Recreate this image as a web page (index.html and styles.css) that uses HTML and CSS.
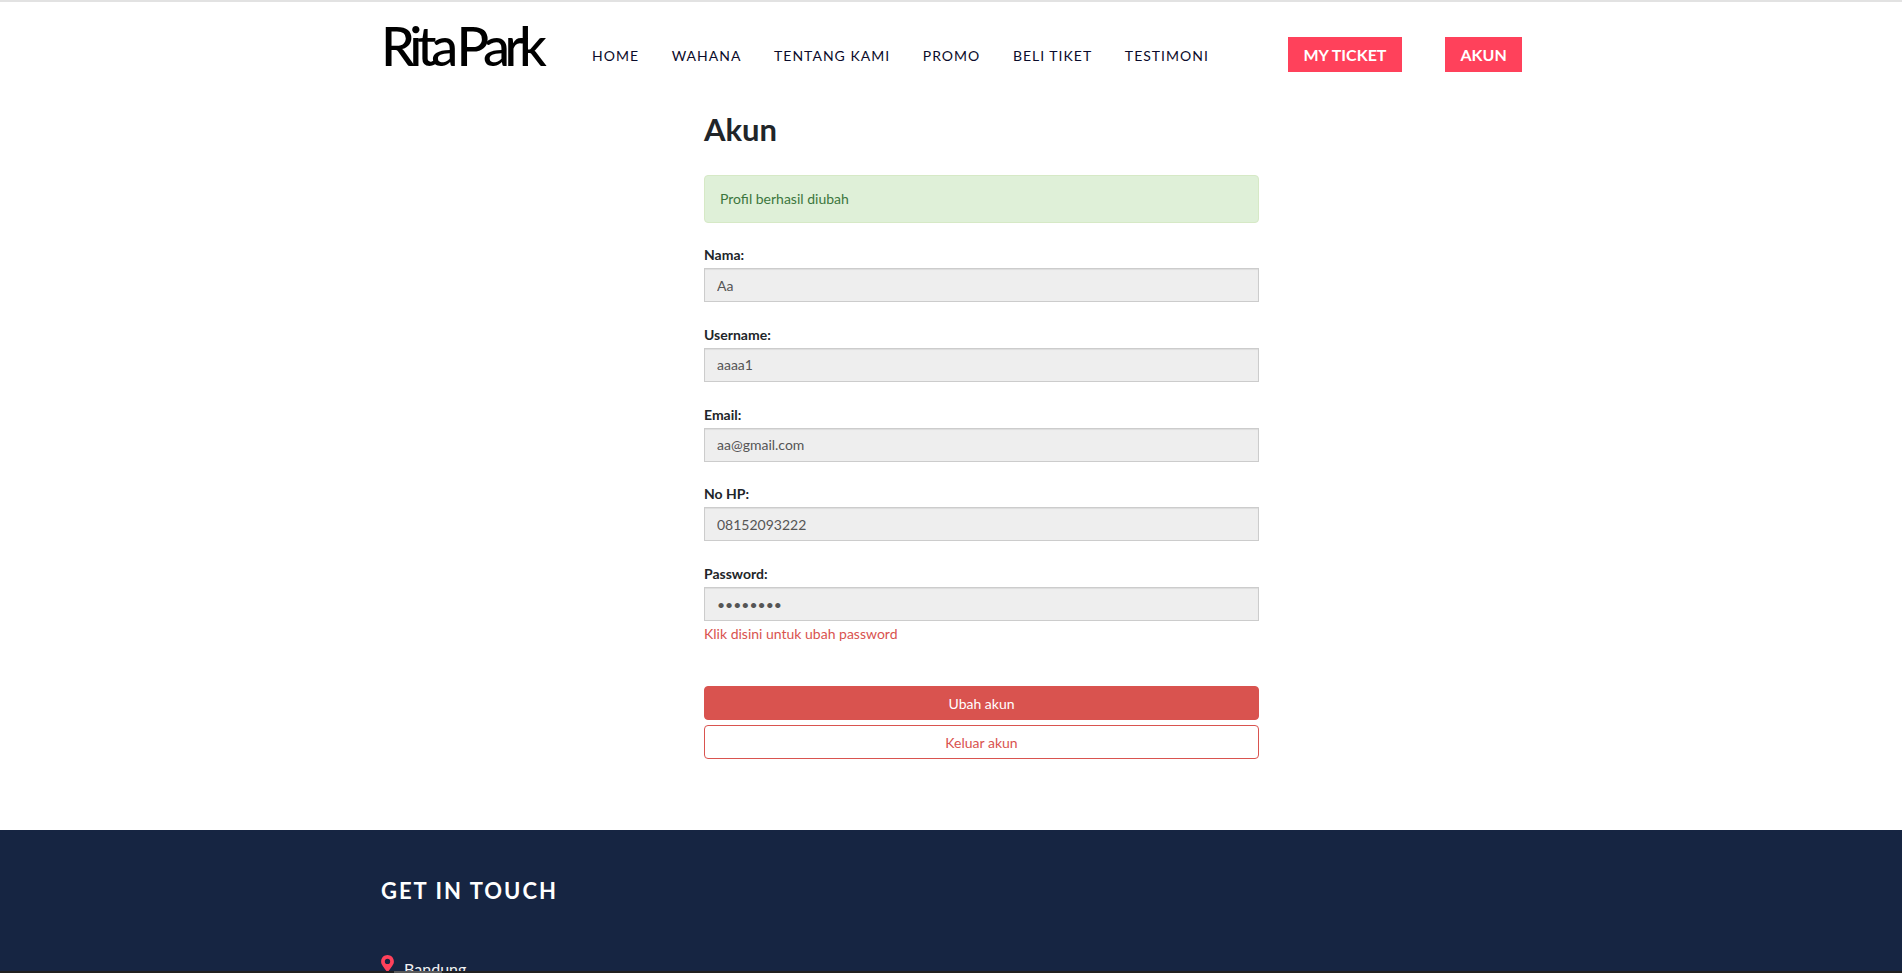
FILE: index.html
```html
<!DOCTYPE html>
<html lang="en">

<head>
    <meta charset="UTF-8">
    <meta name="viewport" content="width=device-width, initial-scale=1.0">
    <title>Rita Park - Akun</title>
    <link rel="stylesheet" href="styles.css">
</head>

<body>
    <header class="header">
        <div class="container header-inner">
            <a class="logo" href="#">Rita Park</a>
            <nav class="nav">
                <a href="#">HOME</a>
                <a href="#">WAHANA</a>
                <a href="#">TENTANG KAMI</a>
                <a href="#">PROMO</a>
                <a href="#">BELI TIKET</a>
                <a href="#">TESTIMONI</a>
            </nav>
            <a class="nav-btn ticket-btn" href="#">MY TICKET</a>
            <a class="nav-btn" href="#">AKUN</a>
        </div>
    </header>

    <main class="container">
        <div class="account">
            <h1>Akun</h1>
            <div class="alert">Profil berhasil diubah</div>
            <form>
                <div class="field">
                    <label>Nama:</label>
                    <input type="text" value="Aa" readonly>
                </div>
                <div class="field">
                    <label>Username:</label>
                    <input type="text" value="aaaa1" readonly>
                </div>
                <div class="field">
                    <label>Email:</label>
                    <input type="text" value="aa@gmail.com" readonly>
                </div>
                <div class="field">
                    <label>No HP:</label>
                    <input type="text" value="08152093222" readonly>
                </div>
                <div class="field">
                    <label>Password:</label>
                    <input type="password" value="aaaaaaaa" readonly>
                    <a class="change-password" href="#">Klik disini untuk ubah password</a>
                </div>
                <button class="btn btn-danger" type="button">Ubah akun</button>
                <button class="btn btn-outline" type="button">Keluar akun</button>
            </form>
        </div>
    </main>

    <footer class="footer">
        <div class="container">
            <h4>GET IN TOUCH</h4>
            <p class="contact">
                <svg class="pin" viewBox="0 0 384 512" width="13" height="17">
                    <path d="M192 0C86 0 0 86 0 192c0 77 27 99 172 310 10 14 30 14 40 0 145-211 172-233 172-310C384 86 298 0 192 0zm0 272a80 80 0 1 1 0-160 80 80 0 0 1 0 160z"/>
                </svg>
                Bandung
            </p>
        </div>
    </footer>
    <div class="scrollbar"><div class="scrollbar-thumb"></div></div>
</body>

</html>
```

FILE: styles.css
```css
html, body {
    height: 973px;
    overflow: hidden;
}

body {
    margin: 0;
    font-family: Lato, sans-serif;
    font-size: 14px;
    color: #212529;
    background-color: white;
}

a {
    text-decoration: none;
}

.container {
    width: 1140px;
    margin: 0 auto;
}

.header {
    border-top: 2px solid #e2e2e2;
    height: 78px;
}

.header-inner {
    display: flex;
    align-items: flex-start;
    height: 78px;
}

.logo {
    flex: none;
    width: 211px;
    padding-top: 9px;
    font-size: 54px;
    font-weight: 500;
    letter-spacing: -5.4px;
    word-spacing: -4.4px;
    line-height: 70px;
    color: black;
    white-space: nowrap;
}

.nav {
    flex: none;
    display: flex;
    gap: 32.7px;
    padding-top: 45px;
    width: 696px;
}

.nav a {
    font-size: 14px;
    letter-spacing: 1px;
    line-height: 17px;
    color: #0b0b2b;
}

.nav-btn {
    flex: none;
    margin-top: 35px;
    height: 35px;
    line-height: 35px;
    padding: 0 15.5px;
    background-color: #ff415b;
    color: white;
    font-size: 16px;
    font-weight: 700;
    white-space: nowrap;
}

.ticket-btn {
    margin-right: 43px;
}

.account {
    width: 555px;
    height: 750px;
    margin-left: 323px;
    padding-top: 31px;
    box-sizing: border-box;
}

h1 {
    font-size: 31px;
    font-weight: 700;
    line-height: 36px;
    margin: 0 0 28px;
}

.alert {
    background-color: #dff0d8;
    border: 1px solid #d6e9c6;
    border-radius: 4px;
    color: #3c763d;
    padding: 12px 15px;
    line-height: 22px;
    margin-bottom: 24px;
}

.field {
    margin-bottom: 24.75px;
}

.field label {
    display: block;
    font-weight: 700;
    line-height: 16px;
    margin-bottom: 5px;
}

.field input {
    display: block;
    width: 100%;
    height: 34px;
    box-sizing: border-box;
    padding: 0 12px;
    background-color: #eee;
    border: 1px solid #ccc;
    box-shadow: inset 0 1px 1px rgba(0, 0, 0, .075);
    font-family: Lato, sans-serif;
    font-size: 14px;
    color: #555;
    outline: none;
}

.change-password {
    display: block;
    margin-top: 3px;
    line-height: 20px;
    color: #d9534f;
}

.btn {
    display: block;
    width: 100%;
    height: 34px;
    border-radius: 4px;
    border: 1px solid #d9534f;
    font-family: Lato, sans-serif;
    font-size: 14px;
    margin-bottom: 5px;
}

.btn-danger {
    margin-top: 42px;
    background-color: #d9534f;
    color: white;
}

.btn-outline {
    background-color: white;
    color: #d9534f;
}

.footer {
    height: 141px;
    background-color: #162542;
    color: white;
    overflow: hidden;
}

.footer h4 {
    font-size: 22px;
    font-weight: 700;
    letter-spacing: 2px;
    line-height: 26px;
    margin: 48px 0 0;
    color: white;
}

.contact {
    margin: 51px 0 0;
    font-size: 16px;
    line-height: 20px;
    color: #f2f2f2;
}

.pin {
    fill: #ff415b;
    margin-right: 6px;
    vertical-align: 3px;
}

.scrollbar {
    height: 2px;
    padding-left: 394px;
    background-color: #202020;
}

.scrollbar-thumb {
    width: 48px;
    height: 2px;
    background-color: #5a5a5a;
}
```
